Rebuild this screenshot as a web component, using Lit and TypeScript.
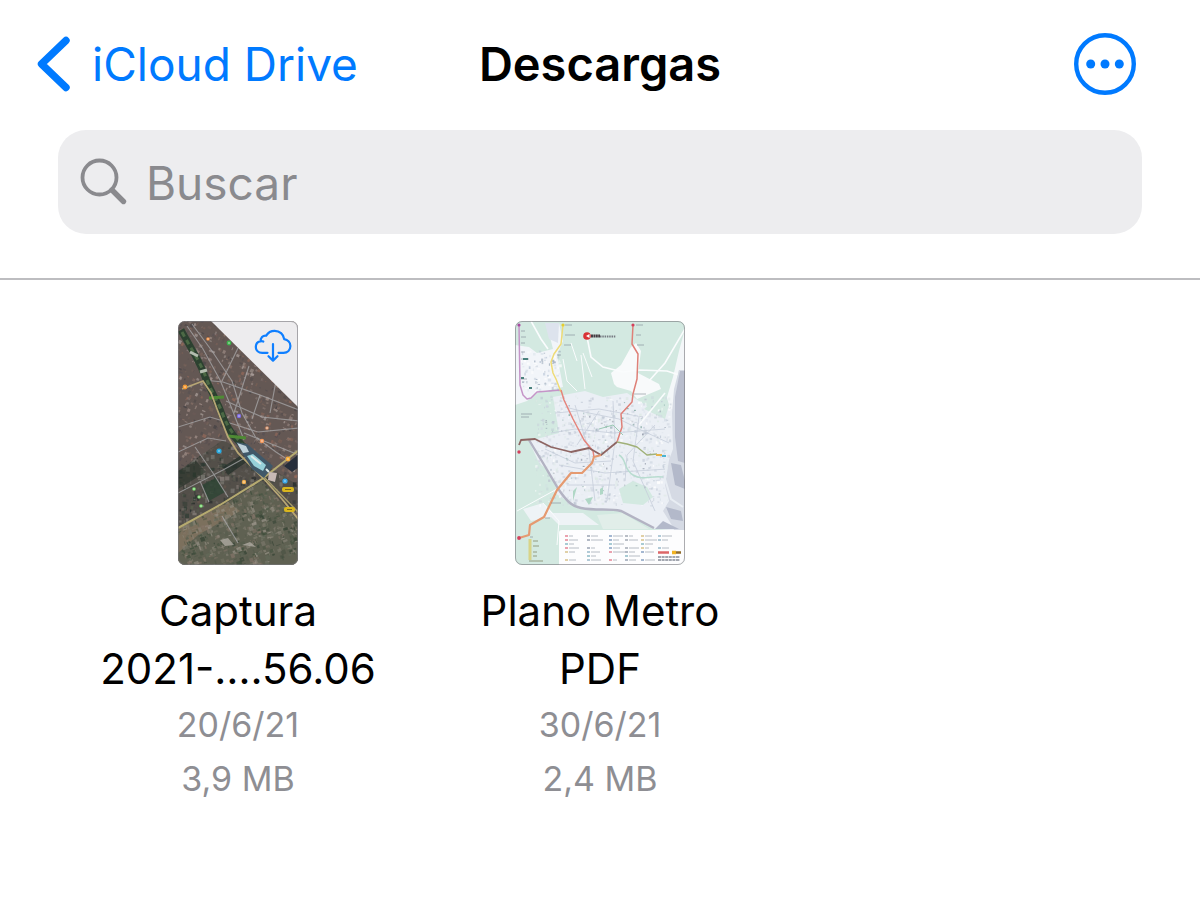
import { LitElement, html, svg, css } from "lit";
import { customElement, property } from "lit/decorators.js";

/** Small seeded generator, so the map textures look the same on each load. */
function seeded(seed: number) {
  let a = seed * 7919;
  return () => {
    a = (a + 0x6d2b79f5) | 0;
    let t = Math.imul(a ^ (a >>> 15), 1 | a);
    t = (t + Math.imul(t ^ (t >>> 7), 61 | t)) ^ t;
    return ((t ^ (t >>> 14)) >>> 0) / 4294967296;
  };
}

interface Fleck { x: number; y: number; w: number; h: number; c: string; o: number }

function flecks(seed: number, n: number, box: number[], size: number, colors: string[]): Fleck[] {
  const r = seeded(seed);
  const out: Fleck[] = [];
  for (let i = 0; i < n; i++) {
    out.push({
      x: box[0] + r() * box[2],
      y: box[1] + r() * box[3],
      w: 0.8 + r() * size,
      h: 0.8 + r() * size,
      c: colors[Math.floor(r() * colors.length)],
      o: 0.3 + r() * 0.5,
    });
  }
  return out;
}

const drawFlecks = (list: Fleck[]) =>
  list.map((f) => svg`<rect x=${f.x.toFixed(1)} y=${f.y.toFixed(1)} width=${f.w.toFixed(1)} height=${f.h.toFixed(1)} fill=${f.c} opacity=${f.o.toFixed(2)} />`);

const ROOFS = flecks(7, 2400, [-30, -40, 190, 260], 2.8, ["#8d746b", "#6a5a57", "#a08e88", "#474346", "#7d655c", "#a89c98", "#575052", "#92695a"]);
const BLOCKS = flecks(19, 420, [0, 112, 121, 90], 4, ["#2b3a31", "#39423b", "#7d7b74", "#59604f", "#252c2a", "#8a827c"]);
const SCRUB = flecks(31, 1100, [-5, 150, 135, 100], 4, ["#525b4b", "#7b7769", "#41503d", "#8a8578", "#626858", "#85766a", "#364435", "#9b958a"]);
const CITY = flecks(43, 800, [20, 74, 136, 110], 2.2, ["#c5cdd9", "#ffffff", "#d3dae4", "#bcc5d2", "#dce8e4"]);
const SUBURB = flecks(53, 110, [6, 28, 38, 42], 2.4, ["#b9c6d6", "#9dabbc", "#d2dbe5", "#ffffff"]);
const LABELS = flecks(61, 80, [30, 80, 122, 90], 1.2, ["#8791a1", "#9a9fab", "#79a09a"]);

const MARKS: [number, number, string, number][] = [
  [30, 18, "#ee8a3c", 1.8], [51, 22, "#3fb24d", 2.4], [7, 66, "#f39a34", 2.4], [61, 95, "#7d6be0", 2.2],
  [41, 130, "#27a9e0", 2.6], [66, 161, "#f2ae4e", 2.2], [110, 138, "#f5ac3b", 2.4], [84, 120, "#f2975a", 2.2],
  [107, 160, "#3da7e8", 2.6], [16, 168, "#6fd867", 1.8], [21, 176, "#74d069", 1.8], [23, 185, "#6fd867", 1.8], [89, 107, "#d8936a", 1.8],
];

const satelliteMap = () => svg`
  <rect width="121" height="244" fill="#655955" />
  <g transform="rotate(24 60 90)">${drawFlecks(ROOFS)}</g>
  <path d="M45 119L72 134L121 165V190L60 178L0 206V150Z" fill="#484a43" opacity=".6" />
  <g clip-path="url(#blockArea)">${drawFlecks(BLOCKS)}</g>
  <path d="M0 208L50 181L84 160L121 200V244H0Z" fill="#5f6152" />
  <path d="M0 208L50 181L62 190L20 214L0 232Z" fill="#897663" opacity=".7" />
  <g clip-path="url(#scrubArea)"><g transform="rotate(-20 60 200)">${drawFlecks(SCRUB)}</g></g>
  <path d="M0 150L18 140L28 151L10 162L0 168Z" fill="#283429" opacity=".6" />
  <path d="M24 164L38 157L47 171L31 180Z" fill="#304536" opacity=".85" />
  <path d="M45 146L62 135L70 140L50 154Z" fill="#24302b" opacity=".75" />
  <path d="M42 219L50 217L56 224L47 225ZM64 224L72 221L78 226Z" fill="#b9b4ad" opacity=".7" />
  <g fill="none" stroke="#a9a9ab" stroke-width="1.1" opacity=".75">
    <path d="M9 5L25 28L42 59L52 83L66 119" />
    <path d="M25 59L45 61L82 74L121 89" />
    <path d="M44 60L60 27" /><path d="M56 92L71 45" /><path d="M92 92L98 60" />
    <path d="M14 3L34 30L54 60L64 92L78 117" />
    <path d="M48 80L84 96L121 100" /><path d="M74 98L82 74" />
    <path d="M0 106L32 96L55 103L80 111L121 107" />
    <path d="M0 172L45 149L72 134" />
    <path d="M17 126L35 152L50 176" />
    <path d="M79 117L98 131L121 146" />
    <path d="M0 131L30 117L48 120" />
    <path d="M66 112L121 134" /><path d="M44 195L60 222" /><path d="M22 160L31 181" />
  </g>
  <path d="M3 9C12 26 20 37 26 53C32 70 40 80 44 94C50 110 58 118 67 127" fill="none" stroke="#2c4130" stroke-width="7" />
  <path d="M4 11C13 28 20 37 27 54C33 71 40 80 45 94C51 110 60 118 67 127" fill="none" stroke="#4c6945" stroke-width="3" stroke-dasharray="5 4" />
  <path d="M31 77L46 76M50 115L68 117" stroke="#4e8a34" stroke-width="3" />
  <path d="M12 31L20 35M22 51L29 49" stroke="#b3bcae" stroke-width="3" />
  <path d="M4 68L25 60L33 72L39 88L50 116L60 132L85 157L104 178L121 199" fill="none" stroke="#b7a675" stroke-width="1.8" />
  <path d="M0 207L42 184L84 158L121 129" fill="none" stroke="#b5aa70" stroke-width="2" />
  <path d="M87 157L121 192" fill="none" stroke="#a79d6b" stroke-width="1.4" />
  <path d="M58 121L69 123L95 145L86 157L74 148Z" fill="#405869" />
  <path d="M59 122L68 125L71 131L65 132Z" fill="#bfd2da" />
  <path d="M69 135L75 133L88 144L85 150L76 145Z" fill="#96d0da" />
  <path d="M73 135L83 143M88 148L91 151" stroke="#dfebea" stroke-width="2" />
  <path d="M91 151L99 152L97 161L90 159Z" fill="#c8b9b5" />
  <path d="M106 145L121 133V146L114 151Z" fill="#262e3b" />
  ${MARKS.map((m) => svg`<circle cx=${m[0]} cy=${m[1]} r=${m[3]} fill=${m[2]} /><circle cx=${m[0]} cy=${m[1]} r="0.8" fill="#fff" opacity=".7" />`)}
  <rect x="104" y="166" width="12" height="5" rx="2" fill="#d9b61f" />
  <rect x="106" y="186" width="11" height="5" rx="2" fill="#d9b61f" />
  <path d="M107 168.500H113M109 188.500H114" stroke="#7c6a1c" stroke-width="1" />
  <path d="M33 0H121V87Z" fill="#edecee" />
  <g fill="none" stroke="#0f7fff" stroke-width="2.200" stroke-linecap="round" stroke-linejoin="round">
    <path d="M89.500 31.800H84.200C80.500 31.800 77.800 29.300 77.800 26C77.800 23 79.900 20.700 82.800 20.200C82.300 16.800 84.800 14.200 88.200 14.600C90 11.500 93.200 9.800 96.700 9.800C101.600 9.800 105.600 13.300 106.200 18.200C109.900 18.800 112.400 21.600 112.400 25.100C112.400 29 109.500 31.800 105.500 31.800H100.500" />
    <path d="M82.800 20.200C83.500 20.100 84.500 20.200 85.300 20.600" />
    <path d="M95 23V39.300M90.500 35.200L95 39.600L99.500 35.200" />
  </g>
`;

const LEGEND_COLS = [50, 72, 94, 110, 126, 143];
const LEGEND_HUES = ["#d95067", "#6e7c92", "#5378a8", "#7b8494", "#c6a758", "#6c9bb4"];

const metroMap = () => svg`
  <rect width="170" height="244" fill="#d3e9e1" />
  <path d="M0 24L14 26L22 32L38 28L33 8L44 2L48 20L42 34L48 66L22 72L12 80L0 84Z" fill="#f2f5f9" />
  <path d="M30 2L44 2L43 22L34 18Z" fill="#dde3ed" />
  <path d="M99 63L96 52L106 44L116 26L121 22L126 30L123 52L144 63L146 68L122 78L116 70L102 66Z" fill="#f8fafb" />
  <path d="M170 8L164 30L158 56L152 76L140 90L158 96L160 68L164 49H170Z" fill="#f4f7f9" />
  <path d="M38 76L70 70L88 76L112 72L124 80L140 90L158 88L160 150L170 168V210L140 208L106 190L64 188L40 172L24 142L14 120L44 112Z" fill="#ebeff5" />
  <path d="M0 150L12 132L34 150L42 168L20 182L0 190Z" fill="#d3e9e1" />
  <path d="M8 188L28 182L38 192L68 192L84 204H44L36 196L16 200Z" fill="#eef3f6" />
  <path d="M82 194L108 192L134 208H88Z" fill="#e1eee9" />
  <path d="M129 88L150 70L154 84L150 98Z" fill="#d3e9e1" />
  <g>${drawFlecks(CITY)}</g>
  <path d="M104 168L118 160L132 166L138 176L128 184L108 182Z" fill="#d3e9e1" />
  <g>${drawFlecks(SUBURB)}</g>
  <g>${drawFlecks(LABELS)}</g>
  <g fill="none" stroke="#fafcfd" stroke-width="1.600">
    <path d="M72 16L76 36L88 46L108 51L124 49L152 50L164 54" />
    <path d="M170 8L150 42L134 60" />
    <path d="M150 72L124 104" /><path d="M16 0L26 18L33 28" />
    <path d="M56 22L62 40M68 32L77 56" stroke-width="1" />
    <path d="M2 190L42 168M28 182L44 200L42 224" stroke-width="1" />
    <path d="M66 34L70 68M48 38L52 60L62 70" stroke-width="1" />
  </g>
  <g fill="none" stroke="#c6ceda" stroke-width=".8">
    <path d="M50 86L74 92L104 98L128 110L154 122" />
    <path d="M40 92L84 88L128 96" /><path d="M36 112L60 108L98 112L150 108" />
    <path d="M60 84L74 130L80 180" /><path d="M98 80L100 120L92 180" />
    <path d="M124 96L118 140L140 190" /><path d="M44 144L90 152L152 148" /><path d="M52 164L100 164" />
    <path d="M30 128L60 142L96 140" /><path d="M84 90L62 124" /><path d="M140 104L112 134L110 160" />
  </g>
  <path d="M164 49H170V244L158 206L148 190L154 180L150 164L154 139L158 128L157 92L159 68Z" fill="#d5dae4" />
  <path d="M165 50H170V142L163 140L160 116V76Z" fill="#b9bece" />
  <path d="M156 142L166 144L170 160V168L160 164ZM151 186L166 190L168 200L156 198ZM148 200L164 208L140 208Z" fill="#b3b9ca" />
  <path d="M152 138L150 158L156 178L168 186" fill="none" stroke="#e8edf3" stroke-width="2" />
  <path d="M14 119L28 142L44 169C51 179 56 185 66 187C82 190 94 187 106 190L139 207" fill="none" stroke="#b3b3c3" stroke-width="2.400" />
  <path d="M104 134C112 138 108 148 118 154C128 160 136 154 148 156" fill="none" stroke="#b9dcd0" stroke-width="1.500" />
  <path d="M58 170L62 166L58 180ZM70 178L78 176L74 184ZM85 168L88 166L88 173L85 174Z" fill="#b1d7c6" />
  <g fill="none" stroke-width="1.500" stroke-linejoin="round">
    <path d="M4 4L5 64L8 74L12 78L16 77L22 71L34 70L46 69" stroke="#c595c8" />
    <path d="M48 4L46 23L39 33L36 41L38 52L41 58L46 71" stroke="#eedb77" />
    <path d="M46 69L49 79L58 98L69 119L78 130L79 136" stroke="#e5857d" />
    <path d="M118 4L117 23L123 33L122 58L118 73L117 81L106 93L107 106L102 121" stroke="#de8078" />
    <path d="M4 124L6 119L20 118L36 126L56 131L74 127L86 134L102 121" stroke="#8e6663" stroke-width="1.800" />
    <path d="M102 121L112 123L122 126L132 134L142 133" stroke="#a1b178" />
    <path d="M86 134L79 136L77 142L67 152L56 152L42 169L29 196L15 204L14 214L4 217" stroke="#e59a71" stroke-width="2.200" />
    <path d="M84 108L98 104L108 114" stroke="#9ac8b3" stroke-width="1" />
  </g>
  <path d="M141 134H147" stroke="#e6b34d" stroke-width="2" /><path d="M147 135H151" stroke="#4bb4d3" stroke-width="2" />
  <g fill="#d4415d">
    <circle cx="118" cy="4" r="1.600" /><circle cx="4" cy="217" r="1.900" /><circle cx="4" cy="131" r="1.700" /><circle cx="4" cy="4" r="1.600" fill="#a74aa0" />
  </g>
  <circle cx="48" cy="4" r="1.600" fill="#e3ce31" />
  <g stroke="#7e8592" stroke-width=".8" opacity=".75">
    <path d="M121 4H128M121 14H126M122 24H129M119 73H131M50 14H60M49 24H56M50 4H57M42 34H46M6 10H10M6 16H11M6 22H10M6 31H10M6 38H14M6 58H12M6 93H17M6 96H14M36 182H46M30 197H35M15 216H18" />
  </g>
  <path d="M8 38H13M6 57H9M14 67H17" stroke="#4b817d" stroke-width="2" />
  <circle cx="72" cy="15" r="3.800" fill="#d93235" /><path d="M74.500 13L71 15L74.500 17Z" fill="#fff" />
  <path d="M76 15H85" stroke="#463c42" stroke-width="3" stroke-dasharray="2 .4" />
  <path d="M85 15.500H101" stroke="#777a82" stroke-width="2.200" stroke-dasharray="1.500 .8" />
  <path d="M15 218V239" stroke="#d8d488" stroke-width="3" /><path d="M18 220H23M18 225H24M18 231H22M18 235H22M14 240H28" stroke="#939c80" stroke-width="1" />
  <path d="M47 209H170V244H44V212Q44 209 47 209Z" fill="#fdfdfe" />
  ${LEGEND_COLS.map((x, col) =>
    [215, 219, 223, 227, 231, 235, 239].map((y, row) =>
      (col * 3 + row) % 6 === 5 || (col === 5 && row > 3) ? null : svg`
      <path d="M${x} ${y}H${x + 3}" stroke=${row % 3 === 2 ? "#5b9eae" : LEGEND_HUES[(col + (row > 3 ? 4 : 0)) % 6]} stroke-width="1.400" opacity=".75" />
      <path d="M${x + 4} ${y}H${x + 8 + ((row * 5 + col * 3) % 9)}" stroke="#8f97a5" stroke-width=".9" opacity=".7" />`
    )
  )}
  <path d="M143 231.500H154" stroke="#dc6668" stroke-width="2.400" /><path d="M157 231.500H161" stroke="#f2b323" stroke-width="3.400" /><path d="M161 231.500H166" stroke="#8f6b2b" stroke-width="2.400" />
  <path d="M143 236H165M143 239H165" stroke="#858b97" stroke-width="1.400" stroke-dasharray="3 .6" />
`;

interface DriveFile {
  name: string;
  date: string;
  size: string;
  width: number;
  art: () => unknown;
}

const FILES: DriveFile[] = [
  { name: "Captura 2021-\u2026.56.06", date: "20/6/21", size: "3,9 MB", width: 120, art: satelliteMap },
  { name: "Plano Metro PDF", date: "30/6/21", size: "2,4 MB", width: 170, art: metroMap },
];

@customElement("file-tile")
export class FileTile extends LitElement {
  @property({ attribute: false }) file!: DriveFile;

  static styles = css`
    :host { display: block; }
    .tile {
      display: flex;
      flex-direction: column;
      align-items: center;
      text-align: center;
      text-decoration: none;
      color: #000;
    }
    .thumb { display: block; height: 244px; margin-bottom: 17px; }
    .name { max-width: 290px; font-size: 42px; line-height: 58px; }
    .meta { font-size: 34px; line-height: 54px; color: #8e8e93; }
  `;

  render() {
    const { name, date, size, width, art } = this.file;
    return html`
      <a class="tile" href="#">
        <svg class="thumb" width=${width} height="244" viewBox="0 0 ${width} 244" aria-hidden="true">
          <defs>
            <clipPath id="sheet"><rect width=${width} height="244" rx="7" /></clipPath>
            <clipPath id="scrubArea"><path d="M0 208L50 181L84 160L121 200V244H0Z" /></clipPath>
            <clipPath id="blockArea"><path d="M0 150L45 119L72 134L121 160V200L84 160L0 208Z" /></clipPath>
          </defs>
          <g clip-path="url(#sheet)">${art()}</g>
          <rect x=".5" y=".5" width=${width - 1} height="243" rx="6.5" fill="none" stroke="#77777c" stroke-opacity=".6" />
        </svg>
        <span class="name">${name}</span>
        <span class="meta">${date}</span>
        <span class="meta">${size}</span>
      </a>
    `;
  }
}

@customElement("app-root")
export class AppRoot extends LitElement {
  static styles = css`
    :host {
      display: block;
      min-height: 100vh;
      background: #fff;
      color: #000;
      font-family: Inter, "Liberation Sans", sans-serif;
    }
    .bar {
      display: grid;
      grid-template-columns: 1fr auto 1fr;
      align-items: center;
      height: 128px;
      padding: 0 36px;
      box-sizing: border-box;
    }
    .top { border-bottom: 2px solid #bdbdc0; padding-bottom: 44px; }
    .back {
      display: flex;
      align-items: center;
      gap: 20px;
      color: #007aff;
      font-size: 46px;
      line-height: 60px;
      text-decoration: none;
      white-space: nowrap;
    }
    .title { margin: 0; font-size: 47px; line-height: 60px; font-weight: 600; }
    .more {
      justify-self: end;
      display: block;
      margin: 0 28px 0 0;
      padding: 0;
      border: 0;
      background: none;
      color: #007aff;
    }
    .icon { display: block; flex: none; }
    .search {
      display: flex;
      align-items: center;
      gap: 18px;
      height: 104px;
      margin: 2px 58px 0;
      padding: 0 22px;
      box-sizing: border-box;
      border-radius: 28px;
      background: #ededef;
      color: #8a8a8e;
    }
    .field {
      flex: 1;
      min-width: 0;
      padding: 2px 0 0;
      border: 0;
      outline: 0;
      background: none;
      color: #000;
      font: inherit;
      font-size: 46px;
      line-height: 60px;
    }
    .field::placeholder { color: #8a8a8e; opacity: 1; }
    .files {
      display: grid;
      grid-template-columns: repeat(3, 1fr);
      padding: 41px 57px;
    }
  `;

  render() {
    return html`
      <header class="top">
        <nav class="bar">
          <a class="back" href="#">
            <svg class="icon" width="36" height="56" viewBox="0 0 36 56" aria-hidden="true">
              <path d="M30 4.500L5.500 28L30 51.500" fill="none" stroke="currentColor" stroke-width="7.400" stroke-linecap="round" stroke-linejoin="round" />
            </svg>
            <span>iCloud Drive</span>
          </a>
          <h1 class="title">Descargas</h1>
          <button class="more" type="button" aria-label="Más opciones">
            <svg class="icon" width="62" height="62" viewBox="0 0 62 62" aria-hidden="true">
              <circle cx="31" cy="31" r="28.800" fill="none" stroke="currentColor" stroke-width="4.400" />
              <g fill="currentColor"><circle cx="16.700" cy="31" r="4.500" /><circle cx="31" cy="31" r="4.500" /><circle cx="45.300" cy="31" r="4.500" /></g>
            </svg>
          </button>
        </nav>
        <label class="search">
          <svg class="icon" width="48" height="48" viewBox="0 0 48 48" aria-hidden="true">
            <g fill="none" stroke="currentColor">
              <circle cx="19.500" cy="19.500" r="17" stroke-width="3.800" />
              <path d="M32 32L43.500 43.500" stroke-width="5.400" stroke-linecap="round" />
            </g>
          </svg>
          <input class="field" type="search" placeholder="Buscar" aria-label="Buscar" />
        </label>
      </header>
      <main class="files">
        ${FILES.map((file) => html`<file-tile .file=${file}></file-tile>`)}
      </main>
    `;
  }
}
